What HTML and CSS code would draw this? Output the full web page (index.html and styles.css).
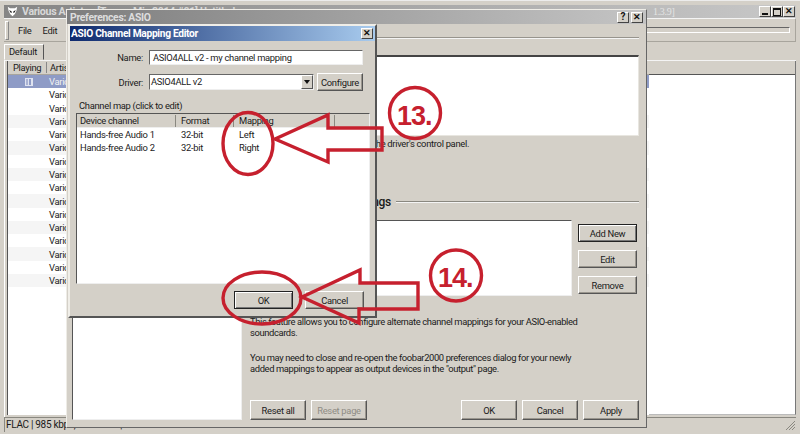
FILE: index.html
```html
<!DOCTYPE html>
<html lang="en">
<head>
    <meta charset="UTF-8">
    <title>Preferences: ASIO</title>
    <link rel="stylesheet" href="styles.css">
</head>
<body>
    <!-- Main player window -->
    <div class="app">
        <div class="app-title">
            <svg class="app-icon" width="11" height="11" viewBox="0 0 14 12">
                <path d="M1 0 L4 2 H10 L13 0 L12 5 Q11 9 7 12 Q3 9 2 5 Z" fill="#fff"/>
                <path d="M3 4 L6 6 L6 8 L4 7 Z M11 4 L8 6 L8 8 L10 7 Z" fill="#222"/>
            </svg>
            <span class="app-title-text">Various Artists - [Trance Mix 2014 #01] Untitled</span>
            <span class="app-title-version">1.3.9]</span>
            <span class="caption-btns">
                <span class="caption-btn min"></span>
                <span class="caption-btn max"></span>
                <span class="caption-btn">&#10005;</span>
            </span>
        </div>
        <div class="toolbar">
            <span class="grip"></span>
            <span class="menu-item">File</span>
            <span class="menu-item">Edit</span>
            <div class="seekbar"></div>
        </div>
        <div class="tabs">
            <span class="tab">Default</span>
        </div>
        <div class="panels">
            <div class="playlist">
                <div class="list-head">
                    <span class="col-playing">Playing</span>
                    <span class="col-artist">Artist</span>
                </div>
                <div class="row selected"><span class="pause"></span><span class="cell">Various</span></div>
                <div class="row"><span class="cell">Various</span></div>
                <div class="row"><span class="cell">Various</span></div>
                <div class="row alt"><span class="cell">Various</span></div>
                <div class="row"><span class="cell">Various</span></div>
                <div class="row alt"><span class="cell">Various</span></div>
                <div class="row"><span class="cell">Various</span></div>
                <div class="row alt"><span class="cell">Various</span></div>
                <div class="row"><span class="cell">Various</span></div>
                <div class="row alt"><span class="cell">Various</span></div>
                <div class="row"><span class="cell">Various</span></div>
                <div class="row alt"><span class="cell">Various</span></div>
                <div class="row"><span class="cell">Various</span></div>
                <div class="row alt"><span class="cell">Various</span></div>
                <div class="row"><span class="cell">Various</span></div>
                <div class="row alt"><span class="cell">Various</span></div>
            </div>
            <div class="side">
                <div class="side-head"></div>
            </div>
        </div>
        <div class="statusbar">FLAC | 985 kbps, 44100 Hz | stereo</div>
        <svg class="size-grip" width="12" height="12" viewBox="0 0 12 12">
            <path d="M11 2 L2 11 M11 5 L5 11 M11 8 L8 11" stroke="#8a8880" fill="none"/>
        </svg>
    </div>

    <!-- Preferences dialog -->
    <div class="prefs">
        <div class="prefs-title">
            <span>Preferences: ASIO</span>
            <span class="caption-btns">
                <span class="caption-btn bold">?</span>
                <span class="caption-btn">&#10005;</span>
            </span>
        </div>
        <div class="prefs-body">
            <div class="tree"></div>
            <div class="pane">
                <div class="pane-rule"></div>
                <div class="driver-box"></div>
                <p class="pane-note">the driver's control panel.</p>
                <div class="group-head">
                    <span class="group-title">Mappings</span>
                    <span class="group-line"></span>
                </div>
                <div class="mappings">
                    <div class="mappings-list"></div>
                    <div class="mappings-btns">
                        <button class="btn default">Add New</button>
                        <button class="btn">Edit</button>
                        <button class="btn">Remove</button>
                    </div>
                </div>
                <p class="pane-text">This feature allows you to configure alternate channel mappings for your ASIO-enabled soundcards.</p>
                <p class="pane-text">You may need to close and re-open the foobar2000 preferences dialog for your newly added mappings to appear as output devices in the "output" page.</p>
                <div class="pane-footer">
                    <button class="btn">Reset all</button>
                    <button class="btn disabled">Reset page</button>
                    <span class="spacer"></span>
                    <button class="btn">OK</button>
                    <button class="btn">Cancel</button>
                    <button class="btn">Apply</button>
                </div>
            </div>
        </div>
    </div>

    <!-- Channel mapping editor -->
    <div class="editor">
        <div class="editor-title">
            <span>ASIO Channel Mapping Editor</span>
            <span class="caption-btn">&#10005;</span>
        </div>
        <div class="field name-field">
            <label>Name:</label>
            <div class="input">ASIO4ALL v2 - my channel mapping</div>
        </div>
        <div class="field driver-field">
            <label>Driver:</label>
            <div class="input select">ASIO4ALL v2<span class="drop"></span></div>
            <button class="btn configure">Configure</button>
        </div>
        <div class="map-label">Channel map (click to edit)</div>
        <div class="map">
            <div class="map-head">
                <span class="map-c1">Device channel</span>
                <span class="map-c2">Format</span>
                <span class="map-c3">Mapping</span>
                <span class="map-c4"></span>
            </div>
            <div class="map-row">
                <span class="map-c1">Hands-free Audio 1</span>
                <span class="map-c2">32-bit</span>
                <span class="map-c3">Left</span>
            </div>
            <div class="map-row">
                <span class="map-c1">Hands-free Audio 2</span>
                <span class="map-c2">32-bit</span>
                <span class="map-c3">Right</span>
            </div>
        </div>
        <div class="editor-footer">
            <button class="btn default">OK</button>
            <button class="btn">Cancel</button>
        </div>
    </div>

    <!-- Red tutorial marks -->
    <svg class="marks" width="800" height="434" viewBox="0 0 800 434">
        <ellipse cx="248" cy="143.5" rx="25" ry="31"/>
        <path d="M275 139 L328 115 V128 H382 V150 H328 V162 Z"/>
        <circle cx="415" cy="113" r="25.5"/>
        <text x="397" y="125">13.</text>
        <ellipse cx="262" cy="298" rx="39" ry="26"/>
        <path d="M302 297 L360 270 V283 H418 V309 H359 V323 Z"/>
        <circle cx="456" cy="275.5" r="25.5"/>
        <text x="438" y="287">14.</text>
    </svg>
</body>
</html>
```

FILE: styles.css
```css
html, body {
    margin: 0;
    padding: 0;
    width: 800px;
    height: 434px;
    overflow: hidden;
}
body {
    background-color: #d4d0c8;
    font-family: Roboto, "Liberation Sans", sans-serif;
    font-size: 9.4px;
    letter-spacing: -0.3px;
    color: #1a1a1a;
    position: relative;
}
p {
    margin: 0;
}

/* shared pieces */
.btn {
    box-sizing: border-box;
    font: inherit;
    letter-spacing: inherit;
    color: #1a1a1a;
    background-color: #d4d0c8;
    padding: 0;
    border: 1px solid;
    border-color: #fff #555 #555 #fff;
    box-shadow: inset -1px -1px 0 #9a968e;
}
.btn.default {
    border: 1px solid #222;
    box-shadow: inset 1px 1px 0 #fff, inset -1px -1px 0 #777;
}
.btn.disabled {
    color: #8f8c85;
}
.caption-btns {
    display: flex;
    flex: none;
    gap: 2px;
}
.caption-btn {
    box-sizing: border-box;
    width: 12px;
    height: 11px;
    flex: none;
    display: flex;
    align-items: center;
    justify-content: center;
    font-size: 9px;
    font-weight: 700;
    line-height: 1;
    letter-spacing: 0;
    color: #111;
    background-color: #d4d0c8;
    border: 1px solid;
    border-color: #fff #444 #444 #fff;
}
.caption-btn.bold {
    font-size: 10px;
}
.caption-btn.min::after {
    content: "";
    width: 6px;
    height: 2px;
    margin-top: 5px;
    background-color: #111;
}
.caption-btn.max::after {
    content: "";
    box-sizing: border-box;
    width: 8px;
    height: 8px;
    border: 1px solid #111;
    border-top-width: 2px;
}

/* main window */
.app {
    box-sizing: border-box;
    width: 800px;
    height: 434px;
    padding: 4px 4px 2px;
    display: flex;
    flex-direction: column;
    background-color: #d4d0c8;
    border-top: 1px solid #ececec;
    position: relative;
}
.app-title {
    height: 13px;
    flex: none;
    display: flex;
    align-items: center;
    background: linear-gradient(to right, #858585, #c8c8c8);
    color: #d8d8d8;
    font-weight: 700;
    font-size: 10.6px;
    padding-left: 3px;
    white-space: nowrap;
}
.app-icon {
    flex: none;
    margin-right: 4px;
}
.app-title-version {
    margin-left: 418px;
    font-family: "Liberation Serif", serif;
    font-weight: 400;
    font-size: 10px;
    color: #e4e4e4;
}
.app-title .caption-btns {
    margin-left: auto;
    margin-right: 1px;
    gap: 0;
}
.toolbar {
    height: 24px;
    flex: none;
    box-sizing: border-box;
    display: flex;
    align-items: center;
    border-top: 1px solid #f4f4f4;
    border-bottom: 1px solid #a8a59d;
    border-right: 1px solid #a8a59d;
}
.grip {
    width: 2px;
    height: 17px;
    margin-left: 1px;
    margin-right: 9px;
    border: 1px solid;
    border-color: #fff #888 #888 #fff;
}
.menu-item {
    margin-right: 11px;
}
.seekbar {
    margin-left: auto;
    margin-right: 5px;
    margin-top: -1px;
    width: 500px;
    height: 4px;
    border-top: 1px solid #666;
    border-bottom: 1px solid #fff;
    border-right: 1px solid #fff;
}
.tabs {
    height: 18px;
    flex: none;
    display: flex;
    align-items: flex-end;
}
.tab {
    box-sizing: border-box;
    width: 40px;
    height: 16px;
    padding: 1px 0 0 4px;
    border: 1px solid;
    border-color: #fff #555 transparent #fff;
}
.panels {
    flex: 1;
    min-height: 0;
    display: flex;
    border-top: 1px solid #f4f4f4;
    border-left: 1px solid #fff;
}
.playlist {
    box-sizing: border-box;
    width: 642px;
    margin-left: 2px;
    background-color: #fff;
    border-left: 1px solid #555;
    margin-bottom: 3px;
}
.list-head {
    height: 13px;
    display: flex;
    align-items: center;
    background-color: #d4d0c8;
    border-bottom: 1px solid #a8a59d;
}
.col-playing {
    box-sizing: border-box;
    width: 39px;
    padding-left: 5px;
    border-right: 1px solid #888;
}
.col-artist {
    padding-left: 3px;
}
.row {
    height: 13.27px;
    display: flex;
    align-items: center;
    position: relative;
}
.row.alt {
    background-color: #f5f5f5;
}
.row.selected {
    background-color: #8e9bc6;
    color: #f2f2f2;
}
.cell {
    padding-left: 41px;
    white-space: nowrap;
}
.pause {
    position: absolute;
    left: 17px;
    top: 3px;
    width: 2px;
    height: 6px;
    border: 1px solid #dfe3f0;
    box-shadow: 3px 0 0 -1px #8e9bc6, 4px 0 0 0 #dfe3f0;
    background-color: #aab3d4;
}
.side {
    flex: 1;
    display: flex;
    flex-direction: column;
    background-color: #fff;
    margin-bottom: 3px;
    border-right: 1px solid #777;
    border-bottom: 1px solid #bbb;
}
.side-head {
    height: 13px;
    background-color: #d4d0c8;
    border-bottom: 1px solid #555;
}
.statusbar {
    height: 15px;
    flex: none;
    box-sizing: border-box;
    padding: 1px 0 0 1px;
    margin-top: -1px;
    font-size: 10px;
    border-top: 1px solid #8a8880;
    border-left: 1px solid #8a8880;
}
.size-grip {
    position: absolute;
    right: 4px;
    bottom: 3px;
}

/* preferences dialog */
.prefs {
    position: absolute;
    left: 66px;
    top: 9px;
    box-sizing: border-box;
    width: 581px;
    height: 419px;
    display: flex;
    flex-direction: column;
    background-color: #d4d0c8;
    border: 1px solid;
    border-color: #eeece6 #666 #666 #eeece6;
}
.prefs-title {
    height: 14px;
    flex: none;
    display: flex;
    align-items: center;
    justify-content: space-between;
    padding: 0 3px;
    background: linear-gradient(to right, #7e7e7e, #c4c4c4);
    color: #ddd;
    font-weight: 700;
    font-size: 10.4px;
}
.prefs-body {
    flex: 1;
    min-height: 0;
    display: flex;
    padding: 4px 7px 7px 5px;
}
.tree {
    box-sizing: border-box;
    width: 170px;
    background-color: #fff;
    border: 1px solid;
    border-color: #555 #eee #eee #555;
}
.pane {
    flex: 1;
    min-width: 0;
    padding-left: 8px;
    display: flex;
    flex-direction: column;
}
.pane-rule {
    height: 1px;
    margin-top: 9px;
    margin-left: -8px;
    background-color: #97948d;
    border-bottom: 1px solid #f4f4f4;
}
.driver-box {
    box-sizing: border-box;
    height: 81px;
    margin-top: 16px;
    margin-left: -8px;
    background-color: #fff;
    border-top: 2px solid #444;
    border-right: 1px solid #e8e6e0;
    border-bottom: 1px solid #e8e6e0;
}
.pane-note {
    margin-top: 2px;
    padding-left: 123px;
    height: 12px;
    line-height: 12px;
    white-space: nowrap;
}
.group-head {
    margin-top: 45px;
    height: 14px;
    display: flex;
    align-items: center;
}
.group-title {
    width: 141px;
    flex: none;
    text-align: right;
    white-space: nowrap;
    font-size: 12px;
    font-weight: 500;
}
.group-line {
    flex: 1;
    height: 1px;
    margin-left: 5px;
    background-color: #8a8880;
    border-bottom: 1px solid #f4f4f4;
}
.mappings {
    margin-top: 11px;
    display: flex;
    gap: 6px;
    height: 76px;
}
.mappings-list {
    box-sizing: border-box;
    width: 323px;
    margin-left: -1px;
    background-color: #fff;
    border: 1px solid;
    border-color: #555 #eee #eee #555;
}
.mappings-btns {
    width: 59px;
    padding-top: 4px;
    display: flex;
    flex-direction: column;
    gap: 8px;
}
.mappings-btns .btn {
    height: 18px;
    width: 59px;
}
.pane-text {
    width: 340px;
    line-height: 11px;
    letter-spacing: -0.38px;
}
.mappings + .pane-text {
    margin-top: 20px;
}
.pane-text + .pane-text {
    margin-top: 14px;
}
.pane-footer {
    margin-top: auto;
    display: flex;
    gap: 5px;
}
.pane-footer .btn {
    width: 56px;
    height: 20px;
}
.spacer {
    flex: 1;
}

/* channel mapping editor */
.editor {
    position: absolute;
    left: 68px;
    top: 24px;
    box-sizing: border-box;
    width: 309px;
    height: 294px;
    background-color: #d4d0c8;
    border: 2px solid;
    border-color: #f0eee8 #555 #555 #f0eee8;
    display: flex;
    flex-direction: column;
}
.editor-title {
    height: 15px;
    flex: none;
    display: flex;
    align-items: center;
    justify-content: space-between;
    padding: 0 2px 0 1px;
    background: linear-gradient(to right, #0e2a6e, #a8cbee);
    color: #fff;
    font-weight: 700;
    font-size: 10.2px;
}
.field {
    display: flex;
    align-items: center;
}
.field label {
    width: 73px;
    flex: none;
    text-align: right;
    margin-right: 6px;
}
.name-field {
    margin-top: 9px;
}
.driver-field {
    margin-top: 8px;
}
.input {
    box-sizing: border-box;
    background-color: #fff;
    border: 1px solid;
    border-color: #666 #eee #eee #666;
    height: 15px;
    width: 214px;
    line-height: 13px;
    padding-left: 3px;
    white-space: nowrap;
}
.select {
    width: 165px;
    padding-left: 1px;
    height: 16px;
    display: flex;
    justify-content: space-between;
}
.drop {
    box-sizing: border-box;
    width: 12px;
    height: 14px;
    background-color: #d4d0c8;
    border: 1px solid;
    border-color: #fff #555 #555 #fff;
    position: relative;
}
.drop::after {
    content: "";
    position: absolute;
    left: 2px;
    top: 4px;
    border-style: solid;
    border-width: 4px 3px 0 3px;
    border-color: #111 transparent transparent transparent;
}
.configure {
    width: 46px;
    height: 18px;
    margin-left: 3px;
}
.map-label {
    margin: 9px 0 0 9px;
    height: 12px;
    line-height: 12px;
}
.map {
    box-sizing: border-box;
    height: 171px;
    margin: 1px 5px 0 6px;
    background-color: #fff;
    border: 1px solid;
    border-color: #555 #eee #eee #555;
}
.map-head, .map-row {
    display: flex;
    align-items: center;
}
.map-head {
    height: 13px;
    background-color: #d4d0c8;
    border-bottom: 1px solid #eee;
}
.map-row {
    height: 13.3px;
}
.map-c1 {
    box-sizing: border-box;
    width: 99px;
    padding-left: 3px;
}
.map-c2 {
    box-sizing: border-box;
    width: 58px;
    padding-left: 5px;
}
.map-c3 {
    box-sizing: border-box;
    width: 101px;
    padding-left: 5px;
}
.map-c4 {
    flex: 1;
}
.map-head span {
    height: 12px;
    line-height: 12px;
    border-right: 1px solid #8a8880;
}
.map-head .map-c4 {
    border-right: 0;
}
.editor-footer {
    display: flex;
    gap: 12px;
    margin: 7px 0 0 164px;
}
.editor-footer .btn {
    width: 59px;
    height: 18px;
}

/* red marks over the screenshot */
.marks {
    position: absolute;
    left: 0;
    top: 0;
    fill: none;
    stroke: #c6202e;
    stroke-width: 3.4;
}
.marks text {
    fill: #c6202e;
    stroke: none;
    font-family: "Liberation Sans", sans-serif;
    font-weight: 700;
    font-size: 27px;
    letter-spacing: -1px;
}
```
